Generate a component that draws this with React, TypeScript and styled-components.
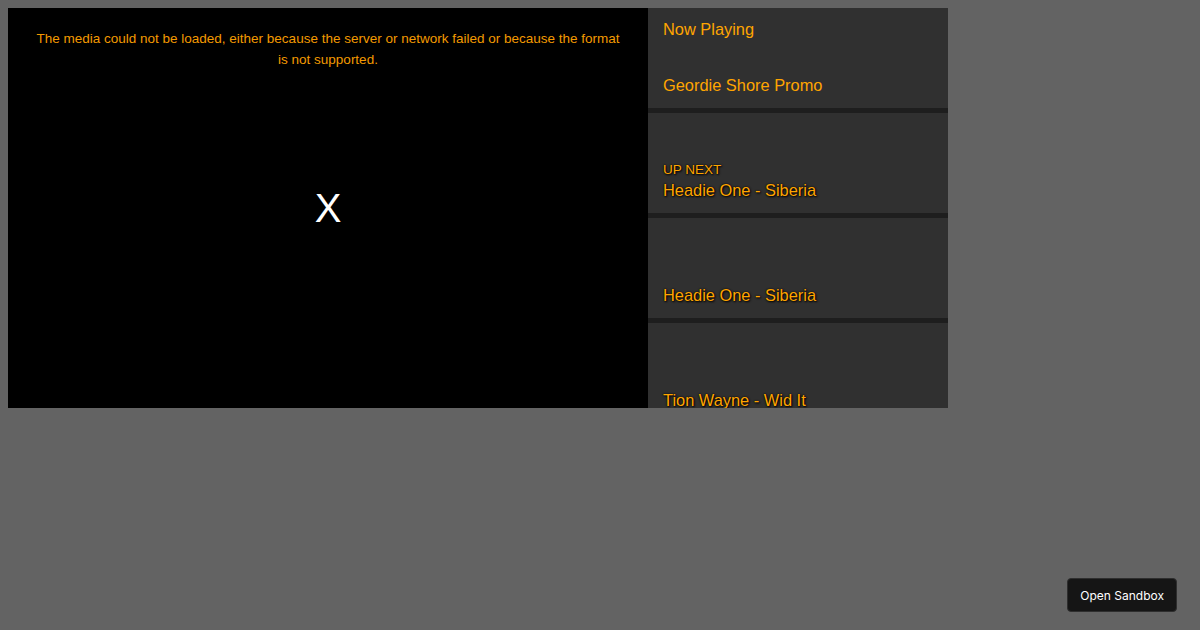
import styled, { createGlobalStyle } from "styled-components";

const GlobalStyle = createGlobalStyle`
  body {
    margin: 8px;
    background: #636363;
    font-family: "Liberation Sans", Arial, sans-serif;
  }
`;

const Player = styled.div`
  display: flex;
  width: 940px;
  height: 400px;
  overflow: hidden;
`;

const Video = styled.div`
  position: relative;
  width: 640px;
  height: 400px;
  background: #000;
  display: flex;
  align-items: center;
  justify-content: center;
  flex-shrink: 0;
`;

const ErrorText = styled.p`
  position: absolute;
  top: 20px;
  left: 25px;
  right: 25px;
  margin: 0;
  text-align: center;
  color: #f39a00;
  font-size: 13.5px;
  line-height: 21px;
`;

const Close = styled.span`
  color: #fff;
  font-size: 40px;
  font-family: "Liberation Sans", Arial, sans-serif;
`;

const Sidebar = styled.div`
  width: 300px;
  background: #303030;
  display: flex;
  flex-direction: column;
`;

const Item = styled.div<{ $head?: boolean }>`
  height: 105px;
  flex-shrink: 0;
  box-sizing: border-box;
  border-bottom: 5px solid #1e1e1e;
  padding: 0 15px 12px;
  display: flex;
  flex-direction: column;
  justify-content: ${(p) => (p.$head ? "space-between" : "flex-end")};
  color: orange;
  text-shadow: ${(p) => (p.$head ? "none" : "1px 1px 2px #000, 0 0 2px #000")};
`;

const Heading = styled.div`
  font-size: 16.4px;
  padding-top: 12px;
`;

const Label = styled.div`
  font-size: 13.5px;
  line-height: 18px;
`;

const Title = styled.div`
  font-size: 16.4px;
  line-height: 22px;
`;

const SandboxButton = styled.button`
  position: fixed;
  right: 23px;
  bottom: 18px;
  background: #151515;
  color: #fff;
  border: 1px solid #2e2e2e;
  border-radius: 4px;
  padding: 0 12px;
  height: 34px;
  font-family: Inter, "Liberation Sans", sans-serif;
  font-size: 12px;
`;

const queue = [
  { label: "UP NEXT", title: "Headie One - Siberia" },
  { title: "Headie One - Siberia" },
  { title: "Tion Wayne - Wid It" },
];

export default function App() {
  return (
    <>
      <GlobalStyle />
      <Player>
        <Video>
          <ErrorText>
            The media could not be loaded, either because the server or network failed or because the
            format is not supported.
          </ErrorText>
          <Close>X</Close>
        </Video>
        <Sidebar>
          <Item $head>
            <Heading>Now Playing</Heading>
            <Title>Geordie Shore Promo</Title>
          </Item>
          {queue.map((q, i) => (
            <Item key={i}>
              {q.label && <Label>{q.label}</Label>}
              <Title>{q.title}</Title>
            </Item>
          ))}
        </Sidebar>
      </Player>
      <SandboxButton>Open Sandbox</SandboxButton>
    </>
  );
}
